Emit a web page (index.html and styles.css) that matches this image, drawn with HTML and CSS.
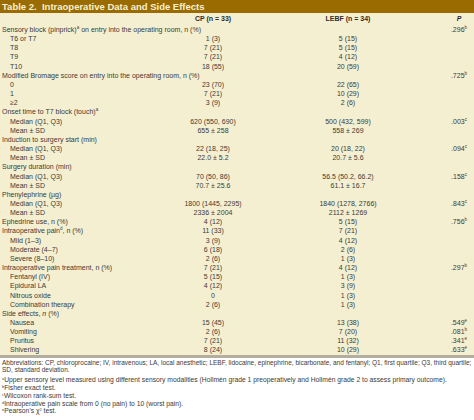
FILE: index.html
```html
<!DOCTYPE html>
<html>
<head>
<meta charset="utf-8">
<link rel="stylesheet" href="styles.css">
</head>
<body>
<div class="title">Table 2.&nbsp; Intraoperative Data and Side Effects</div>
<div class="data">
  <div class="row head"><span class="lbl"></span><span>CP (n = 33)</span><span>LEBF (n = 34)</span><span class="pv"><i>P</i></span></div>
  <div class="row"><span class="lbl">Sensory block (pinprick)<sup>a</sup> on entry into the operating room, n (%)</span><span></span><span></span><span class="pv">.296<sup>b</sup></span></div>
  <div class="row"><span class="sub">T6 or T7</span><span>1 (3)</span><span>5 (15)</span><span></span></div>
  <div class="row"><span class="sub">T8</span><span>7 (21)</span><span>5 (15)</span><span></span></div>
  <div class="row"><span class="sub">T9</span><span>7 (21)</span><span>4 (12)</span><span></span></div>
  <div class="row"><span class="sub">T10</span><span>18 (55)</span><span>20 (59)</span><span></span></div>
  <div class="row"><span class="lbl">Modified Bromage score on entry into the operating room, n (%)</span><span></span><span></span><span class="pv">.725<sup>b</sup></span></div>
  <div class="row"><span class="sub">0</span><span>23 (70)</span><span>22 (65)</span><span></span></div>
  <div class="row"><span class="sub">1</span><span>7 (21)</span><span>10 (29)</span><span></span></div>
  <div class="row"><span class="sub">≥2</span><span>3 (9)</span><span>2 (6)</span><span></span></div>
  <div class="row"><span class="lbl">Onset time to T7 block (touch)<sup>a</sup></span><span></span><span></span><span></span></div>
  <div class="row"><span class="sub">Median (Q1, Q3)</span><span>620 (550, 690)</span><span>500 (432, 599)</span><span class="pv">.003<sup>c</sup></span></div>
  <div class="row"><span class="sub">Mean ± SD</span><span>655 ± 258</span><span>558 ± 269</span><span></span></div>
  <div class="row"><span class="lbl">Induction to surgery start (min)</span><span></span><span></span><span></span></div>
  <div class="row"><span class="sub">Median (Q1, Q3)</span><span>22 (18, 25)</span><span>20 (18, 22)</span><span class="pv">.094<sup>c</sup></span></div>
  <div class="row"><span class="sub">Mean ± SD</span><span>22.0 ± 5.2</span><span>20.7 ± 5.6</span><span></span></div>
  <div class="row"><span class="lbl">Surgery duration (min)</span><span></span><span></span><span></span></div>
  <div class="row"><span class="sub">Median (Q1, Q3)</span><span>70 (50, 86)</span><span>56.5 (50.2, 66.2)</span><span class="pv">.158<sup>c</sup></span></div>
  <div class="row"><span class="sub">Mean ± SD</span><span>70.7 ± 25.6</span><span>61.1 ± 16.7</span><span></span></div>
  <div class="row"><span class="lbl">Phenylephrine (µg)</span><span></span><span></span><span></span></div>
  <div class="row"><span class="sub">Median (Q1, Q3)</span><span>1800 (1445, 2295)</span><span>1840 (1278, 2766)</span><span class="pv">.843<sup>c</sup></span></div>
  <div class="row"><span class="sub">Mean ± SD</span><span>2336 ± 2004</span><span>2112 ± 1269</span><span></span></div>
  <div class="row"><span class="lbl">Ephedrine use, n (%)</span><span>4 (12)</span><span>5 (15)</span><span class="pv">.756<sup>b</sup></span></div>
  <div class="row"><span class="lbl">Intraoperative pain<sup>d</sup>, n (%)</span><span>11 (33)</span><span>7 (21)</span><span></span></div>
  <div class="row"><span class="sub">Mild (1–3)</span><span>3 (9)</span><span>4 (12)</span><span></span></div>
  <div class="row"><span class="sub">Moderate (4–7)</span><span>6 (18)</span><span>2 (6)</span><span></span></div>
  <div class="row"><span class="sub">Severe (8–10)</span><span>2 (6)</span><span>1 (3)</span><span></span></div>
  <div class="row"><span class="lbl">Intraoperative pain treatment, n (%)</span><span>7 (21)</span><span>4 (12)</span><span class="pv">.297<sup>b</sup></span></div>
  <div class="row"><span class="sub">Fentanyl (IV)</span><span>5 (15)</span><span>1 (3)</span><span></span></div>
  <div class="row"><span class="sub">Epidural LA</span><span>4 (12)</span><span>3 (9)</span><span></span></div>
  <div class="row"><span class="sub">Nitrous oxide</span><span>0</span><span>1 (3)</span><span></span></div>
  <div class="row"><span class="sub">Combination therapy</span><span>2 (6)</span><span>1 (3)</span><span></span></div>
  <div class="row"><span class="lbl">Side effects, <i>n</i> (%)</span><span></span><span></span><span></span></div>
  <div class="row"><span class="sub">Nausea</span><span>15 (45)</span><span>13 (38)</span><span class="pv">.549<sup>e</sup></span></div>
  <div class="row"><span class="sub">Vomiting</span><span>2 (6)</span><span>7 (20)</span><span class="pv">.081<sup>b</sup></span></div>
  <div class="row"><span class="sub">Pruritus</span><span>7 (21)</span><span>11 (32)</span><span class="pv">.341<sup>e</sup></span></div>
  <div class="row"><span class="sub">Shivering</span><span>8 (24)</span><span>10 (29)</span><span class="pv">.633<sup>e</sup></span></div>
</div>
<div class="notes">
  <p class="abbr">Abbreviations: CP, chloroprocaine; IV, intravenous; LA, local anesthetic; LEBF, lidocaine, epinephrine, bicarbonate, and fentanyl; Q1, first quartile; Q3, third quartile; SD, standard deviation.</p>
  <p><sup>a</sup>Upper sensory level measured using different sensory modalities (Hollmén grade 1 preoperatively and Hollmén grade 2 to assess primary outcome).</p>
  <p><sup>b</sup>Fisher exact test.</p>
  <p><sup>c</sup>Wilcoxon rank-sum test.</p>
  <p><sup>d</sup>Intraoperative pain scale from 0 (no pain) to 10 (worst pain).</p>
  <p><sup>e</sup>Pearson's χ<sup>2</sup> test.</p>
</div>
</body>
</html>
```
FILE: styles.css
```css
html, body {
  margin: 0;
  padding: 0;
  background: #ffffff;
}
body {
  width: 474px;
  font-family: "Liberation Sans", Arial, sans-serif;
  color: #3c3a36;
}
.title {
  height: 13px;
  line-height: 13px;
  background: #9a6c00;
  color: #f7f0d2;
  font-weight: bold;
  font-size: 9.5px;
  padding-left: 2px;
  white-space: nowrap;
}
.data {
  background: #f5efd1;
  border-bottom: 3px solid #b3ae9d;
  font-size: 7px;
}
.row {
  display: grid;
  grid-template-columns: 178px 70px 200px 26px;
  height: 9.16px;
  line-height: 9.16px;
}
.row > span {
  text-align: center;
  white-space: nowrap;
  min-width: 0;
}
.row.head {
  height: 12px;
  line-height: 12px;
  font-weight: bold;
  color: #2e2c28;
}
.row .lbl {
  text-align: left;
  padding-left: 2px;
  overflow: visible;
}
.row .sub {
  text-align: left;
  padding-left: 10px;
}
.row .pv {
  padding-right: 4px;
}
sup {
  font-size: 4.5px;
  line-height: 0;
  vertical-align: 2.6px;
}
.notes {
  padding: 1px 0 0 2px;
  font-size: 6.75px;
  line-height: 7.8px;
  color: #3c3a36;
}
.notes p {
  margin: 0;
}
.notes p.abbr {
  font-size: 6.5px;
  margin-bottom: 2px;
}
.notes sup {
  font-size: 4px;
  vertical-align: 2.4px;
}
```
